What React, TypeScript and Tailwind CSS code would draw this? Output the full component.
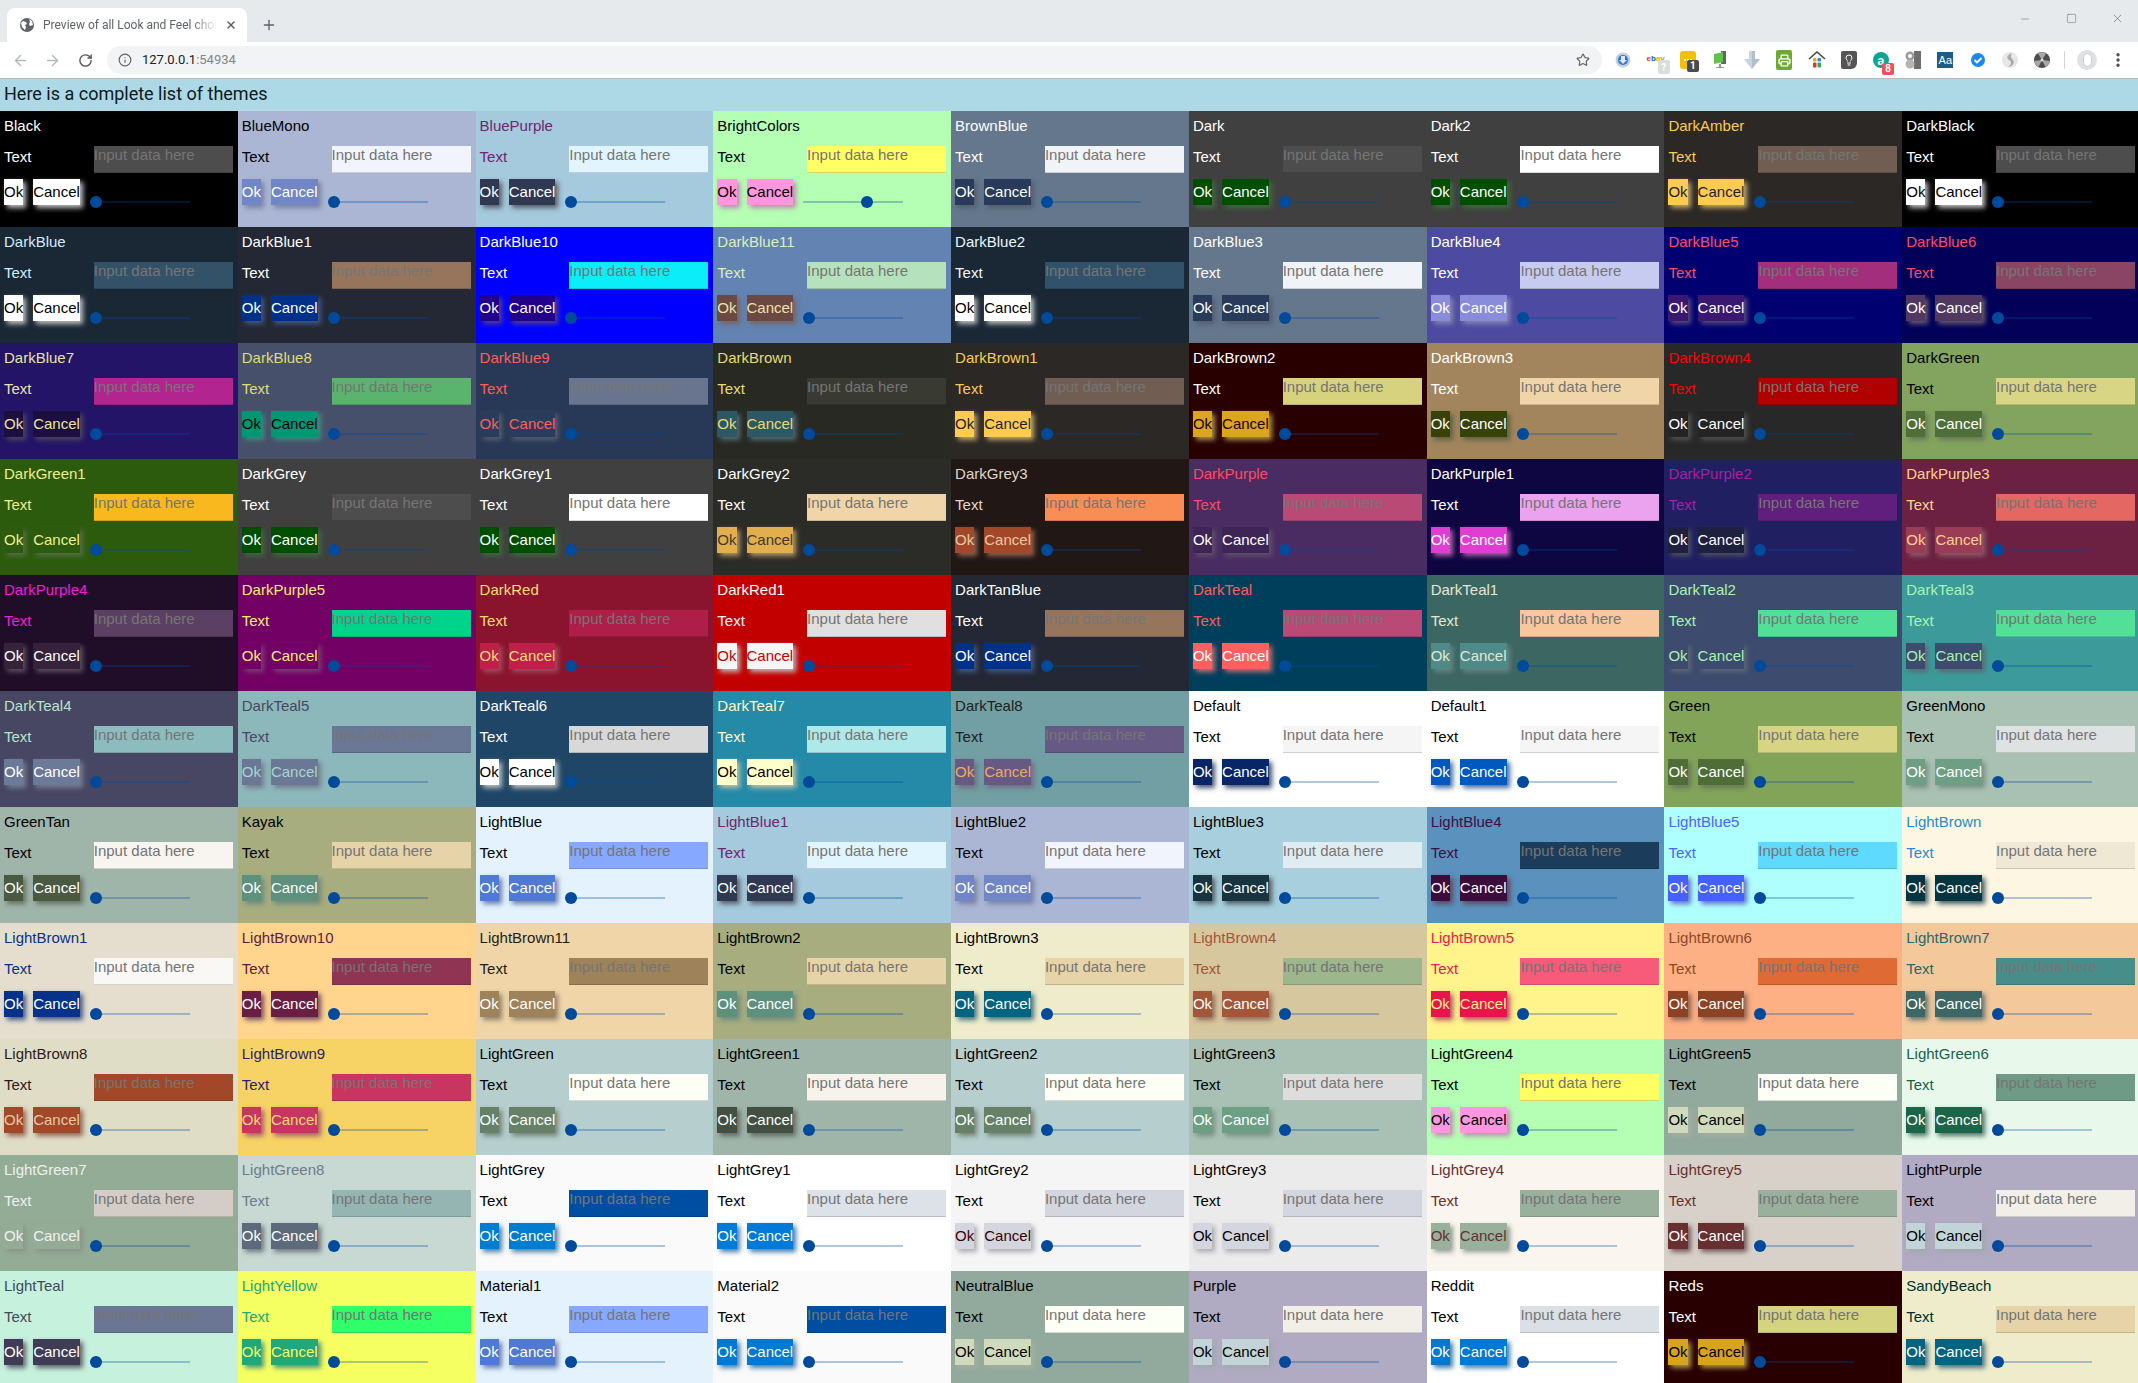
import { ArrowLeft, ArrowRight, RotateCw, Info, Star, Plus, X, Minus, Square, EllipsisVertical, Printer, Lightbulb } from 'lucide-react';

type Theme = { name: string; cell: string; input: string; btn: string; value?: number };

const themes: Theme[] = [
    { name: 'Black', cell: 'bg-[#000000] text-[#ffffff]', input: 'bg-[#4d4d4d]', btn: '[--b:#ffffff] text-[#000000]' },
    { name: 'BlueMono', cell: 'bg-[#aab6d3] text-[#000000]', input: 'bg-[#f1f4fc]', btn: '[--b:#7186c7] text-[#ffffff]' },
    { name: 'BluePurple', cell: 'bg-[#a5cadd] text-[#6e266e]', input: 'bg-[#e0f5ff]', btn: '[--b:#303952] text-[#ffffff]' },
    { name: 'BrightColors', cell: 'bg-[#b4ffb4] text-[#000000]', input: 'bg-[#ffff64]', btn: '[--b:#ff96e0] text-[#000000]', value: 58 },
    { name: 'BrownBlue', cell: 'bg-[#64778d] text-[#ffffff]', input: 'bg-[#f0f3f7]', btn: '[--b:#283b5b] text-[#ffffff]' },
    { name: 'Dark', cell: 'bg-[#404040] text-[#ffffff]', input: 'bg-[#4d4d4d]', btn: '[--b:#004f00] text-[#ffffff]' },
    { name: 'Dark2', cell: 'bg-[#404040] text-[#ffffff]', input: 'bg-[#ffffff]', btn: '[--b:#004f00] text-[#ffffff]' },
    { name: 'DarkAmber', cell: 'bg-[#2c2825] text-[#fdcb52]', input: 'bg-[#705e52]', btn: '[--b:#fdcb52] text-[#1c1e23]' },
    { name: 'DarkBlack', cell: 'bg-[#000000] text-[#ffffff]', input: 'bg-[#4d4d4d]', btn: '[--b:#ffffff] text-[#000000]' },

    { name: 'DarkBlue', cell: 'bg-[#1a2835] text-[#d1ecff]', input: 'bg-[#335267]', btn: '[--b:#ffffff] text-[#000000]' },
    { name: 'DarkBlue1', cell: 'bg-[#242834] text-[#ffffff]', input: 'bg-[#97755c]', btn: '[--b:#00318a] text-[#ffffff]' },
    { name: 'DarkBlue10', cell: 'bg-[#0000ff] text-[#ffffff]', input: 'bg-[#0beef9]', btn: '[--b:#22008c] text-[#ffffff]' },
    { name: 'DarkBlue11', cell: 'bg-[#6383b2] text-[#dbefbe]', input: 'bg-[#b5e2bd]', btn: '[--b:#6c4843] text-[#ebe4a6]' },
    { name: 'DarkBlue2', cell: 'bg-[#1a2735] text-[#ebf8ff]', input: 'bg-[#31526a]', btn: '[--b:#ffffff] text-[#000000]' },
    { name: 'DarkBlue3', cell: 'bg-[#64778d] text-[#ffffff]', input: 'bg-[#f0f3f7]', btn: '[--b:#283b5b] text-[#ffffff]' },
    { name: 'DarkBlue4', cell: 'bg-[#4d4ba1] text-[#ffffff]', input: 'bg-[#c7cbef]', btn: '[--b:#898bdb] text-[#ffffff]' },
    { name: 'DarkBlue5', cell: 'bg-[#000070] text-[#ff4b6a]', input: 'bg-[#a22e7c]', btn: '[--b:#3a1872] text-[#ffffff]' },
    { name: 'DarkBlue6', cell: 'bg-[#020058] text-[#ff4b6a]', input: 'bg-[#8a4564]', btn: '[--b:#503860] text-[#ffffff]' },

    { name: 'DarkBlue7', cell: 'bg-[#231467] text-[#e8e3a7]', input: 'bg-[#b22590]', btn: '[--b:#1d0e40] text-[#e8e3a7]' },
    { name: 'DarkBlue8', cell: 'bg-[#47506b] text-[#dcdc78]', input: 'bg-[#5ab46e]', btn: '[--b:#009874] text-[#000000]' },
    { name: 'DarkBlue9', cell: 'bg-[#273956] text-[#ff5c5c]', input: 'bg-[#69758f]', btn: '[--b:#2a3c5c] text-[#ff5c5c]' },
    { name: 'DarkBrown', cell: 'bg-[#282923] text-[#e7db74]', input: 'bg-[#393a32]', btn: '[--b:#2c5765] text-[#e7db74]' },
    { name: 'DarkBrown1', cell: 'bg-[#2c2825] text-[#fdcb52]', input: 'bg-[#705e52]', btn: '[--b:#fdcb52] text-[#1c1e23]' },
    { name: 'DarkBrown2', cell: 'bg-[#280000] text-[#ffffff]', input: 'bg-[#d7d27d]', btn: '[--b:#daa520] text-[#1e0000]' },
    { name: 'DarkBrown3', cell: 'bg-[#a2855d] text-[#ffffff]', input: 'bg-[#f0d5a9]', btn: '[--b:#364207] text-[#ffffff]' },
    { name: 'DarkBrown4', cell: 'bg-[#282828] text-[#ff0000]', input: 'bg-[#b00000]', btn: '[--b:#242424] text-[#ffffff]' },
    { name: 'DarkGreen', cell: 'bg-[#83a45e] text-[#000000]', input: 'bg-[#d8d584]', btn: '[--b:#4f6f38] text-[#ffffff]' },

    { name: 'DarkGreen1', cell: 'bg-[#2d5b0d] text-[#f0ee8a]', input: 'bg-[#f9b81e]', btn: '[--b:#2c5a0f] text-[#f0ee8a]' },
    { name: 'DarkGrey', cell: 'bg-[#404040] text-[#ffffff]', input: 'bg-[#4d4d4d]', btn: '[--b:#004f00] text-[#ffffff]' },
    { name: 'DarkGrey1', cell: 'bg-[#404040] text-[#ffffff]', input: 'bg-[#ffffff]', btn: '[--b:#004f00] text-[#ffffff]' },
    { name: 'DarkGrey2', cell: 'bg-[#2b2b28] text-[#ffffff]', input: 'bg-[#f0d5a9]', btn: '[--b:#e3ae4e] text-[#3a3a2e]' },
    { name: 'DarkGrey3', cell: 'bg-[#211715] text-[#e3d5c8]', input: 'bg-[#f98d56]', btn: '[--b:#a24828] text-[#e8c9a5]' },
    { name: 'DarkPurple', cell: 'bg-[#4a2c62] text-[#ff4b60]', input: 'bg-[#b94a75]', btn: '[--b:#3f2457] text-[#ffffff]' },
    { name: 'DarkPurple1', cell: 'bg-[#0d0640] text-[#ffffff]', input: 'bg-[#eba3f0]', btn: '[--b:#e03ed3] text-[#ffffff]' },
    { name: 'DarkPurple2', cell: 'bg-[#201f62] text-[#a81fa3]', input: 'bg-[#601f7d]', btn: '[--b:#1e2040] text-[#ffffff]' },
    { name: 'DarkPurple3', cell: 'bg-[#6c2142] text-[#ffd28f]', input: 'bg-[#e46763]', btn: '[--b:#9a3c56] text-[#ffd28f]' },

    { name: 'DarkPurple4', cell: 'bg-[#200d27] text-[#f21cdc]', input: 'bg-[#5b4063]', btn: '[--b:#36223b] text-[#ffffff]' },
    { name: 'DarkPurple5', cell: 'bg-[#730065] text-[#f4ee7a]', input: 'bg-[#00d48a]', btn: '[--b:#730065] text-[#f4ee7a]' },
    { name: 'DarkRed', cell: 'bg-[#8a142e] text-[#f8dd7a]', input: 'bg-[#ad1e48]', btn: '[--b:#bd2048] text-[#f8dd7a]' },
    { name: 'DarkRed1', cell: 'bg-[#c30000] text-[#ffffff]', input: 'bg-[#e0e0e0]', btn: '[--b:#f5f5f5] text-[#c30000]' },
    { name: 'DarkTanBlue', cell: 'bg-[#242834] text-[#ffffff]', input: 'bg-[#97755c]', btn: '[--b:#00318a] text-[#ffffff]' },
    { name: 'DarkTeal', cell: 'bg-[#003f5c] text-[#ff5c5c]', input: 'bg-[#b94a75]', btn: '[--b:#ff5f5f] text-[#ffffff]' },
    { name: 'DarkTeal1', cell: 'bg-[#3c6662] text-[#e3e8d3]', input: 'bg-[#f6c89c]', btn: '[--b:#4d8a88] text-[#e3e8d3]' },
    { name: 'DarkTeal2', cell: 'bg-[#3c4b6e] text-[#a8f5b0]', input: 'bg-[#52e098]', btn: '[--b:#3c4b6e] text-[#a8f5b0]' },
    { name: 'DarkTeal3', cell: 'bg-[#3c9b9a] text-[#a8f5b0]', input: 'bg-[#52e098]', btn: '[--b:#3c4b6e] text-[#a8f5b0]' },

    { name: 'DarkTeal4', cell: 'bg-[#474663] text-[#b8e5c8]', input: 'bg-[#8cbcbe]', btn: '[--b:#6b7a99] text-[#ffffff]' },
    { name: 'DarkTeal5', cell: 'bg-[#8db8bb] text-[#484763]', input: 'bg-[#6a7896]', btn: '[--b:#6a7896] text-[#a8d5cc]' },
    { name: 'DarkTeal6', cell: 'bg-[#1f4666] text-[#ffffff]', input: 'bg-[#d8d8d8]', btn: '[--b:#ffffff] text-[#000000]' },
    { name: 'DarkTeal7', cell: 'bg-[#248aa8] text-[#fefac8]', input: 'bg-[#aee8e8]', btn: '[--b:#ffffcc] text-[#000000]' },
    { name: 'DarkTeal8', cell: 'bg-[#719fa3] text-[#202020]', input: 'bg-[#665a85]', btn: '[--b:#665a85] text-[#f2a860]' },
    { name: 'Default', cell: 'bg-[#ffffff] text-[#000000]', input: 'bg-[#f5f5f5]', btn: '[--b:#082567] text-[#ffffff]' },
    { name: 'Default1', cell: 'bg-[#ffffff] text-[#000000]', input: 'bg-[#f5f5f5]', btn: '[--b:#0059c1] text-[#ffffff]' },
    { name: 'Green', cell: 'bg-[#82a459] text-[#000000]', input: 'bg-[#d7d584]', btn: '[--b:#4f6e37] text-[#ffffff]' },
    { name: 'GreenMono', cell: 'bg-[#a9c1b3] text-[#000000]', input: 'bg-[#dfe2e3]', btn: '[--b:#6e9f85] text-[#ffffff]' },

    { name: 'GreenTan', cell: 'bg-[#9fb5aa] text-[#000000]', input: 'bg-[#f8f4ef]', btn: '[--b:#4a5a41] text-[#ffffff]' },
    { name: 'Kayak', cell: 'bg-[#a7ad7f] text-[#000000]', input: 'bg-[#e6d3a8]', btn: '[--b:#5d907d] text-[#ffffff]' },
    { name: 'LightBlue', cell: 'bg-[#e3f2fd] text-[#000000]', input: 'bg-[#86a8ff]', btn: '[--b:#5079d3] text-[#ffffff]' },
    { name: 'LightBlue1', cell: 'bg-[#a5cadd] text-[#6e266e]', input: 'bg-[#e0f5ff]', btn: '[--b:#303952] text-[#ffffff]' },
    { name: 'LightBlue2', cell: 'bg-[#aab6d3] text-[#000000]', input: 'bg-[#f1f4fc]', btn: '[--b:#7186c7] text-[#ffffff]' },
    { name: 'LightBlue3', cell: 'bg-[#a8cfdd] text-[#000000]', input: 'bg-[#dfedf2]', btn: '[--b:#183440] text-[#ffffff]' },
    { name: 'LightBlue4', cell: 'bg-[#5b91bd] text-[#3e0e45]', input: 'bg-[#1b3c5a]', btn: '[--b:#3c0c3c] text-[#ffffff]' },
    { name: 'LightBlue5', cell: 'bg-[#b0ffff] text-[#4f62ff]', input: 'bg-[#5edaff]', btn: '[--b:#4460ff] text-[#ffffff]' },
    { name: 'LightBrown', cell: 'bg-[#fdf6e3] text-[#268bd1]', input: 'bg-[#eee8d5]', btn: '[--b:#063542] text-[#ffffff]' },

    { name: 'LightBrown1', cell: 'bg-[#e5dece] text-[#063289]', input: 'bg-[#f9f8f4]', btn: '[--b:#063289] text-[#ffffff]' },
    { name: 'LightBrown10', cell: 'bg-[#ffd58e] text-[#5e1c3c]', input: 'bg-[#8f3452]', btn: '[--b:#6b1e42] text-[#ffffff]' },
    { name: 'LightBrown11', cell: 'bg-[#f0d5a9] text-[#1e1e14]', input: 'bg-[#9e8259]', btn: '[--b:#9e8259] text-[#ffffff]' },
    { name: 'LightBrown2', cell: 'bg-[#a7ad7f] text-[#000000]', input: 'bg-[#e6d3a8]', btn: '[--b:#5d907d] text-[#ffffff]' },
    { name: 'LightBrown3', cell: 'bg-[#efeccb] text-[#000000]', input: 'bg-[#e6d3a8]', btn: '[--b:#046380] text-[#ffffff]' },
    { name: 'LightBrown4', cell: 'bg-[#d7c79e] text-[#a35638]', input: 'bg-[#9db68c]', btn: '[--b:#a35638] text-[#ffffff]' },
    { name: 'LightBrown5', cell: 'bg-[#fff38b] text-[#e81b52]', input: 'bg-[#f85b79]', btn: '[--b:#e8154d] text-[#fff38b]' },
    { name: 'LightBrown6', cell: 'bg-[#fcb084] text-[#8a4a2a]', input: 'bg-[#e06a33]', btn: '[--b:#8e4224] text-[#ffffff]' },
    { name: 'LightBrown7', cell: 'bg-[#f3c89b] text-[#296a6a]', input: 'bg-[#478d8a]', btn: '[--b:#3d6764] text-[#ffffff]' },

    { name: 'LightBrown8', cell: 'bg-[#e0ddc7] text-[#2e1a14]', input: 'bg-[#a24828]', btn: '[--b:#a24828] text-[#e8c9a5]' },
    { name: 'LightBrown9', cell: 'bg-[#f6d364] text-[#2b1d6c]', input: 'bg-[#c83561]', btn: '[--b:#c83561] text-[#fbd971]' },
    { name: 'LightGreen', cell: 'bg-[#b7cece] text-[#000000]', input: 'bg-[#fdfff7]', btn: '[--b:#658268] text-[#ffffff]' },
    { name: 'LightGreen1', cell: 'bg-[#9fb5aa] text-[#000000]', input: 'bg-[#f7f3ec]', btn: '[--b:#435041] text-[#ffffff]' },
    { name: 'LightGreen2', cell: 'bg-[#b7cece] text-[#000000]', input: 'bg-[#fdfff7]', btn: '[--b:#658268] text-[#ffffff]' },
    { name: 'LightGreen3', cell: 'bg-[#a8c1b4] text-[#000000]', input: 'bg-[#dddddd]', btn: '[--b:#6d9f85] text-[#ffffff]' },
    { name: 'LightGreen4', cell: 'bg-[#b4ffb4] text-[#000000]', input: 'bg-[#ffff64]', btn: '[--b:#ff96e0] text-[#000000]' },
    { name: 'LightGreen5', cell: 'bg-[#92aa9d] text-[#000000]', input: 'bg-[#fcfff6]', btn: '[--b:#d0dbbd] text-[#000000]' },
    { name: 'LightGreen6', cell: 'bg-[#e8f9ec] text-[#1b5e4b]', input: 'bg-[#6f9a85]', btn: '[--b:#1b6549] text-[#ffffff]' },

    { name: 'LightGreen7', cell: 'bg-[#93ac95] text-[#f0f0f0]', input: 'bg-[#d4ccc6]', btn: '[--b:#94ac96] text-[#f0f0f0]' },
    { name: 'LightGreen8', cell: 'bg-[#c8d8d2] text-[#6d7d8a]', input: 'bg-[#95b5b3]', btn: '[--b:#5c6a7b] text-[#ffffff]' },
    { name: 'LightGrey', cell: 'bg-[#fafafa] text-[#000000]', input: 'bg-[#004ea1]', btn: '[--b:#007dd1] text-[#ffffff]' },
    { name: 'LightGrey1', cell: 'bg-[#ffffff] text-[#000000]', input: 'bg-[#dde1e8]', btn: '[--b:#007ad9] text-[#ffffff]' },
    { name: 'LightGrey2', cell: 'bg-[#f5f5f5] text-[#000000]', input: 'bg-[#d3d6df]', btn: '[--b:#d3d6df] text-[#3a0000]' },
    { name: 'LightGrey3', cell: 'bg-[#ecebeb] text-[#000000]', input: 'bg-[#d3d6df]', btn: '[--b:#d3d6df] text-[#000000]' },
    { name: 'LightGrey4', cell: 'bg-[#faf5ef] text-[#672f2f]', input: 'bg-[#99b19c]', btn: '[--b:#99b19c] text-[#672f2f]' },
    { name: 'LightGrey5', cell: 'bg-[#d7d1c9] text-[#672f2f]', input: 'bg-[#99b19c]', btn: '[--b:#672f2f] text-[#ffffff]' },
    { name: 'LightPurple', cell: 'bg-[#b0aac2] text-[#000000]', input: 'bg-[#f2efe8]', btn: '[--b:#c2d4d8] text-[#000000]' },

    { name: 'LightTeal', cell: 'bg-[#c6f1dd] text-[#3f4a5a]', input: 'bg-[#6a7693]', btn: '[--b:#3f3d56] text-[#ffffff]' },
    { name: 'LightYellow', cell: 'bg-[#f6ff62] text-[#21a77a]', input: 'bg-[#2fff6a]', btn: '[--b:#21a77a] text-[#f6ff62]' },
    { name: 'Material1', cell: 'bg-[#e3f2fd] text-[#000000]', input: 'bg-[#86a8ff]', btn: '[--b:#5079d3] text-[#ffffff]' },
    { name: 'Material2', cell: 'bg-[#fafafa] text-[#000000]', input: 'bg-[#004ea1]', btn: '[--b:#0079d3] text-[#ffffff]' },
    { name: 'NeutralBlue', cell: 'bg-[#92aa9d] text-[#000000]', input: 'bg-[#fcfff6]', btn: '[--b:#d0dbbd] text-[#000000]' },
    { name: 'Purple', cell: 'bg-[#b0aac2] text-[#000000]', input: 'bg-[#f2efe8]', btn: '[--b:#c2d4d8] text-[#000000]' },
    { name: 'Reddit', cell: 'bg-[#ffffff] text-[#000000]', input: 'bg-[#dae0e6]', btn: '[--b:#0079d3] text-[#ffffff]' },
    { name: 'Reds', cell: 'bg-[#280001] text-[#ffffff]', input: 'bg-[#d4d37f]', btn: '[--b:#d9a41d] text-[#000000]' },
    { name: 'SandyBeach', cell: 'bg-[#efeccb] text-[#012f2f]', input: 'bg-[#e6d3a8]', btn: '[--b:#046380] text-[#ffffff]' },
];

function ThemeButton({ label, className }: { label: string; className: string }) {
    return (
        <button className={`h-[26px] shrink-0 bg-(--b) leading-[26px] shadow-[3px_3px_5px_color-mix(in_srgb,var(--b)_50%,gray)] ${className}`}>
            {label}
        </button>
    );
}

function ThemeCell({ theme }: { theme: Theme }) {
    return (
        <div className={`h-[116px] overflow-hidden pl-[4px] pr-[5px] font-['Liberation_Sans',sans-serif] text-[15px] ${theme.cell}`}>
            <div className="h-[30px] truncate leading-[30px]">{theme.name}</div>
            <div className="mt-[5px] flex h-[27px] items-start">
                <span className="leading-[22px]">Text</span>
                <input
                    readOnly
                    placeholder="Input data here"
                    className={`ml-auto h-[27px] w-[139px] border-b border-black/15 pb-[10px] outline-none placeholder:text-[#757575] ${theme.input}`}
                />
            </div>
            <div className="mt-[6px] flex items-start">
                <ThemeButton label="Ok" className={theme.btn} />
                <ThemeButton label="Cancel" className={`ml-[10px] ${theme.btn}`} />
                {/* slider */}
                <div className="relative ml-[10px] mt-[17px] flex h-[12px] w-[100px] items-center">
                    <div className="h-[2px] w-full bg-[#004a9c]/30" />
                    <div className="absolute top-0 h-[12px] w-[12px] rounded-full bg-[#004a9c]" style={{ left: theme.value ?? 0 }} />
                </div>
            </div>
        </div>
    );
}

function Badge({ label, className }: { label: string; className: string }) {
    return (
        <span className={`absolute -bottom-[3px] -right-[3px] flex h-[12px] w-[12px] items-center justify-center rounded-[2px] text-[10px] font-bold leading-none ${className}`}>
            {label}
        </span>
    );
}

function Extensions() {
    const cell = 'relative flex h-[32px] w-[32.2px] shrink-0 items-center justify-center';
    return (
        <div className="ml-[5px] flex items-center pr-[4px]">
            <div className={cell}>
                <svg width="16" height="16" viewBox="0 0 16 16">
                    <circle cx="8" cy="8" r="7.5" fill="#c4ced6" />
                    <circle cx="8" cy="8" r="5" fill="#2f6fd8" />
                    <path d="M6 4h4v4h2l-4 4-4-4h2z" fill="#dbe7f7" />
                </svg>
            </div>
            <div className={cell}>
                <span className="relative -mt-[2px] flex font-['Liberation_Sans',sans-serif] text-[8px] font-bold leading-none">
                    <span className="text-[#e53238]">e</span>
                    <span className="text-[#0064d2]">b</span>
                    <span className="text-[#f5af02]">a</span>
                    <span className="text-[#86b817]">y</span>
                </span>
                <span className="absolute bottom-[2px] right-[2px] flex h-[14px] w-[12px] items-center justify-center rounded-[2px] bg-[#dcdcdc] text-[10px] font-bold text-white">?</span>
            </div>
            <div className={cell}>
                <div className="relative flex h-[18px] w-[16px] items-center justify-center gap-[1px] rounded-[3px] bg-[#f2bf0a]">
                    <span className="h-[2px] w-[2px] bg-white" />
                    <span className="h-[2px] w-[2px] bg-white" />
                    <span className="h-[2px] w-[2px] bg-white" />
                    <Badge label="1" className="bg-[#4a4a4a] text-white" />
                </div>
            </div>
            <div className={cell}>
                <svg width="16" height="20" viewBox="0 0 16 20">
                    <path d="M9 1h5v13H9z" fill="#5a6b5e" />
                    <path d="M2 4l9-2v10l-9 2z" fill="#62c34a" />
                    <path d="M7 14h2v3h3v1H4v-1h3z" fill="#8d9a90" />
                </svg>
            </div>
            <div className={cell}>
                <svg width="18" height="20" viewBox="0 0 18 20">
                    <path d="M6 1h6v8h5l-8 10-8-10h5z" fill="#aebfc9" />
                    <path d="M6 1h3v18l-8-10h5z" fill="#c8d5dc" />
                </svg>
            </div>
            <div className={cell}>
                <div className="flex h-[20px] w-[16px] items-center justify-center rounded-[2px] bg-[#6cab2f]">
                    <Printer size={13} strokeWidth={2.5} className="text-white" />
                </div>
            </div>
            <div className={cell}>
                <svg width="18" height="20" viewBox="0 0 18 20">
                    <path d="M1 9l8-7 8 7" fill="none" stroke="#444" strokeWidth="1.5" />
                    <rect x="5" y="8" width="3.5" height="3.5" rx="1" fill="#f2a31b" />
                    <rect x="9.5" y="8" width="3.5" height="3.5" rx="1" fill="#2e86de" />
                    <rect x="5" y="12.5" width="3.5" height="5" rx="1" fill="#d93a2b" />
                    <rect x="9.5" y="12.5" width="3.5" height="5" rx="1" fill="#3aa757" />
                </svg>
            </div>
            <div className={cell}>
                <div className="flex h-[18px] w-[16px] items-center justify-center rounded-[2px] rounded-br-[6px] bg-[#555555]">
                    <Lightbulb size={12} className="text-white" />
                </div>
            </div>
            <div className={cell}>
                <div className="relative flex h-[16px] w-[16px] items-center justify-center rounded-full bg-[#0fa595] font-['Liberation_Sans',sans-serif] text-[13px] font-bold leading-none text-white">
                    a
                    <Badge label="8" className="-bottom-[7px] -right-[5px] bg-[#f1505a] text-white" />
                </div>
            </div>
            <div className={cell}>
                <svg width="16" height="18" viewBox="0 0 16 18">
                    <rect x="9" y="0" width="7" height="18" fill="#6e6e6e" />
                    <circle cx="5" cy="5" r="4.5" fill="#9a9a9a" />
                    <circle cx="5" cy="13" r="4.5" fill="#b4b4b4" />
                    <circle cx="5" cy="5" r="2" fill="#ffffff" />
                </svg>
            </div>
            <div className={cell}>
                <div className="flex h-[16px] w-[16px] items-center justify-center bg-[#1d5c8a] font-['Liberation_Sans',sans-serif] text-[11px] leading-none text-white">Aa</div>
            </div>
            <div className={cell}>
                <svg width="14" height="14" viewBox="0 0 14 14">
                    <circle cx="7" cy="7" r="7" fill="#1e88ee" />
                    <path d="M3.5 7l2.5 2.5 4.5-4.5" fill="none" stroke="#fff" strokeWidth="1.8" />
                </svg>
            </div>
            <div className={cell}>
                <svg width="16" height="16" viewBox="0 0 16 16">
                    <circle cx="8" cy="8" r="8" fill="#e6e6e6" />
                    <path d="M10 1C5 3 4 6 7 8s3 4-1 7c5-1 7-4 5-7S8 5 10 1z" fill="#a8a8a8" />
                </svg>
            </div>
            <div className={cell}>
                <svg width="16" height="16" viewBox="0 0 16 16">
                    <circle cx="8" cy="8" r="8" fill="#4e4e4e" />
                    <path d="M8 8L4 1.5a8 8 0 0 1 8 0zM8 8l7.5 1a8 8 0 0 1-4 6zM8 8l-3.5 7a8 8 0 0 1-4-6z" fill="#a8a8a8" />
                    <circle cx="8" cy="8" r="1.5" fill="#dddddd" />
                </svg>
            </div>
            <div className="ml-[6px] h-[18px] w-px bg-[#d5d5d5]" />
            <div className="ml-[12px] flex h-[20px] w-[20px] items-center justify-center rounded-full bg-[#dfe1e3]">
                <div className="h-[14px] w-[9px] rounded-full border border-[#c9ccce] bg-white" />
            </div>
            <div className="ml-[5px] flex h-[32px] w-[32px] items-center justify-center">
                <EllipsisVertical size={18} strokeWidth={2.5} className="text-[#4a4a4a]" />
            </div>
        </div>
    );
}

export default function App() {
    return (
        <div className="h-[1383px] w-full overflow-hidden bg-white font-['Roboto',sans-serif]">
            {/* Tab strip */}
            <div className="flex h-[42px] items-end bg-[#e7eaed] pl-[7px]">
                <div className="flex h-[34px] w-[240px] items-center rounded-t-[8px] bg-white pl-[13px]">
                    <svg width="14" height="14" viewBox="0 0 14 14" className="shrink-0">
                        <circle cx="7" cy="7" r="7" fill="#5f6368" />
                        <path d="M3 3l3 1 1 2-2 1 1 2-1 3-3-3-1-4zM9 1l3 2 1 4-3 1-1-2 1-2z" fill="#ffffff" />
                    </svg>
                    <span className="ml-[9px] w-[175px] overflow-hidden whitespace-nowrap text-[12px] text-[#5f6368] [mask-image:linear-gradient(to_right,black_85%,transparent)]">
                        Preview of all Look and Feel choices
                    </span>
                    <X size={12} strokeWidth={3} className="ml-[7px] text-[#5f6368]" />
                </div>
                <Plus size={16} strokeWidth={2} className="mb-[9px] ml-[14px] text-[#5f6368]" />
                <div className="-mr-[2px] mb-[17px] ml-auto flex items-center">
                    <div className="flex w-[46px] justify-center"><Minus size={12} strokeWidth={1} className="text-[#555]" /></div>
                    <div className="flex w-[46px] justify-center"><Square size={11} strokeWidth={1} className="text-[#555]" /></div>
                    <div className="flex w-[46px] justify-center"><X size={13} strokeWidth={1} className="text-[#555]" /></div>
                </div>
            </div>

            {/* Toolbar */}
            <div className="flex h-[37px] items-center border-b border-[#b9b9b9] bg-white">
                <ArrowLeft size={17} strokeWidth={2} className="ml-[12px] shrink-0 text-[#b4b7ba]" />
                <ArrowRight size={17} strokeWidth={2} className="ml-[15px] shrink-0 text-[#b4b7ba]" />
                <RotateCw size={15} strokeWidth={2.2} className="ml-[17px] shrink-0 text-[#55585c]" />
                <div className="ml-[14px] flex h-[28px] flex-1 items-center rounded-full bg-[#f1f3f4] pl-[11px] pr-[12px] text-[13px]">
                    <Info size={14} strokeWidth={2} className="text-[#5f6368]" />
                    <span className="ml-[10px] text-[#202124]">127.0.0.1</span>
                    <span className="text-[#80868b]">:54934</span>
                    <Star size={14} strokeWidth={2} className="ml-auto text-[#5f6368]" />
                </div>
                <Extensions />
            </div>

            {/* Page */}
            <div className="h-[32px] bg-[#add8e6] pl-[4px] text-[18px] leading-[30px] text-[#0c1a20]">Here is a complete list of themes</div>
            <div className="grid w-[2140px] grid-cols-9">
                {themes.map((theme) => (
                    <ThemeCell key={theme.name} theme={theme} />
                ))}
            </div>
        </div>
    );
}
